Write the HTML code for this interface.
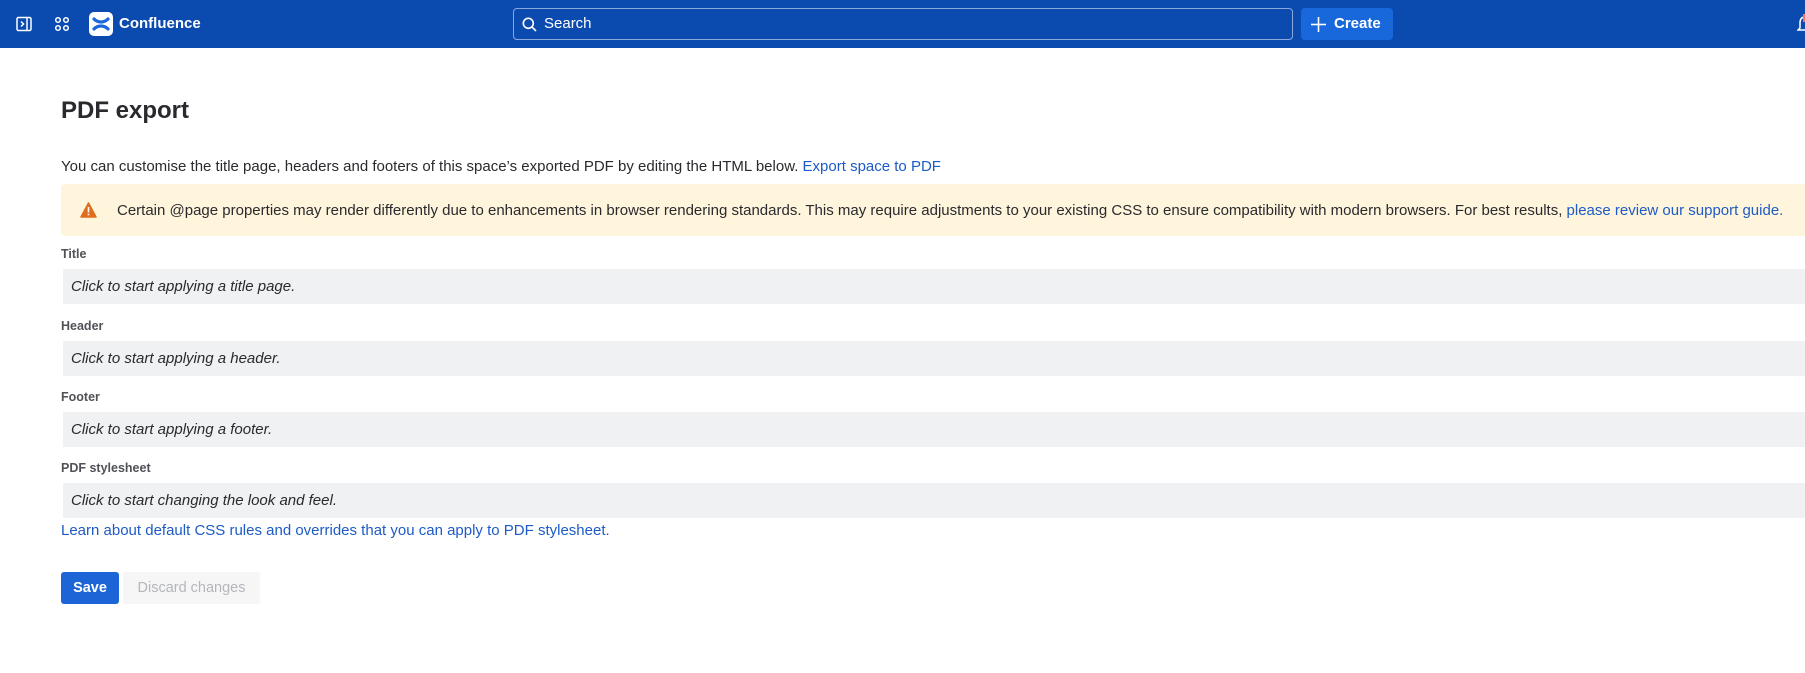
<!DOCTYPE html>
<html><head><meta charset="utf-8">
<style>
*{box-sizing:border-box;margin:0;padding:0}
body{width:1805px;height:673px;overflow:hidden;background:#fff;font-family:"Liberation Sans",sans-serif;color:#292a2e;position:relative}
.nav{position:absolute;left:0;top:0;width:1805px;height:48px;background:#0b4bb0}
.abs{position:absolute}
.t{position:absolute;white-space:nowrap}
.lbl{position:absolute;left:61px;font-size:12.5px;font-weight:bold;color:#505258}
.fld{position:absolute;left:63px;width:1742px;height:35px;background:#f0f1f2;font-style:italic;font-size:15px;padding-left:8px;line-height:36px;color:#292a2e}
a{color:#1d5bc6;text-decoration:none}
</style></head><body>
<div class="nav">
  <svg class="abs" style="left:16px;top:16px" width="16" height="16" viewBox="0 0 16 16"><rect x="1" y="1.5" width="14" height="13" rx="1.5" fill="none" stroke="#fff" stroke-width="1.5"/><line x1="11" y1="2" x2="11" y2="14" stroke="#fff" stroke-width="1.5"/><path d="M5 5.5l2.5 2.5L5 10.5" fill="none" stroke="#fff" stroke-width="1.5"/></svg>
  <svg class="abs" style="left:54px;top:16px" width="16" height="16" viewBox="0 0 16 16" fill="none" stroke="#fff" stroke-width="1.5"><circle cx="4" cy="4" r="2.3"/><circle cx="12" cy="4" r="2.3"/><circle cx="4" cy="12" r="2.3"/><circle cx="12" cy="12" r="2.3"/></svg>
  <div class="abs" style="left:89px;top:12px;width:24px;height:24px;background:#fff;border-radius:5px"></div>
  <svg class="abs" style="left:89px;top:12px" width="24" height="24" viewBox="0 0 24 24"><path d="M5 7c3 3 6 3 7 3s4 0 7-3M5 17c3-3 6-3 7-3s4 0 7 3" fill="none" stroke="#1868db" stroke-width="3.2" stroke-linecap="round"/></svg>
  <div class="t" style="left:119px;top:15px;color:#fff;font-weight:bold;font-size:15px">Confluence</div>
  <div class="abs" style="left:513px;top:8px;width:780px;height:32px;border:1px solid #8da9dc;border-radius:4px"></div>
  <svg class="abs" style="left:522px;top:17px" width="15" height="15" viewBox="0 0 15 15" fill="none" stroke="#fff" stroke-width="1.6"><circle cx="6.3" cy="6.3" r="5"/><line x1="10" y1="10" x2="14" y2="14"/></svg>
  <div class="t" style="left:544px;top:15px;color:#fff;font-size:15px">Search</div>
  <div class="abs" style="left:1301px;top:8px;width:92px;height:32px;background:#1868db;border-radius:4px"></div>
  <svg class="abs" style="left:1311px;top:17px" width="15" height="15" viewBox="0 0 15 15" stroke="#fff" stroke-width="1.6"><line x1="7.5" y1="0" x2="7.5" y2="15"/><line x1="0" y1="7.5" x2="15" y2="7.5"/></svg>
  <div class="t" style="left:1334px;top:15px;color:#fff;font-weight:bold;font-size:15px">Create</div>
  <svg class="abs" style="left:1797px;top:14px" width="10" height="20" viewBox="0 0 10 20"><path d="M8 3c-4 0-5 3-5 6v5l-2 2h9" fill="none" stroke="#fff" stroke-width="1.5"/><rect x="6" y="0" width="4" height="8" fill="#f87168"/></svg>
</div>
<div class="t" style="left:61px;top:97px;font-size:24px;font-weight:bold">PDF export</div>
<div class="t" style="left:61px;top:158px;font-size:15px">You can customise the title page, headers and footers of this space’s exported PDF by editing the HTML below. <a>Export space to PDF</a></div>
<div class="abs" style="left:61px;top:184px;width:1744px;height:52px;background:#fff4dc;border-radius:4px 0 0 4px"></div>
<svg class="abs" style="left:80px;top:202px" width="17" height="16" viewBox="0 0 17 16"><path d="M8.5 1L16 15H1z" fill="#e06c1e" stroke="#e06c1e" stroke-linejoin="round" stroke-width="1.5"/><rect x="7.7" y="5" width="1.6" height="5.5" fill="#fff"/><rect x="7.7" y="11.7" width="1.6" height="1.6" fill="#fff"/></svg>
<div class="t" style="left:117px;top:202px;font-size:15px">Certain @page properties may render differently due to enhancements in browser rendering standards. This may require adjustments to your existing CSS to ensure compatibility with modern browsers. For best results, <a>please review our support guide.</a></div>
<div class="lbl" style="top:247px">Title</div>
<div class="fld" style="top:269px">Click to start applying a title page.</div>
<div class="lbl" style="top:319px">Header</div>
<div class="fld" style="top:341px">Click to start applying a header.</div>
<div class="lbl" style="top:390px">Footer</div>
<div class="fld" style="top:412px">Click to start applying a footer.</div>
<div class="lbl" style="top:461px">PDF stylesheet</div>
<div class="fld" style="top:483px">Click to start changing the look and feel.</div>
<div class="t" style="left:61px;top:522px;font-size:15px"><a>Learn about default CSS rules and overrides that you can apply to PDF stylesheet.</a></div>
<div class="abs" style="left:61px;top:572px;width:58px;height:32px;background:#1d65d6;border-radius:3px;color:#fff;font-weight:bold;font-size:14.5px;text-align:center;line-height:32px">Save</div>
<div class="abs" style="left:123px;top:572px;width:137px;height:32px;background:#f6f6f7;border-radius:3px;color:#b4b6bb;font-size:14.5px;text-align:center;line-height:32px">Discard changes</div>
</body></html>
